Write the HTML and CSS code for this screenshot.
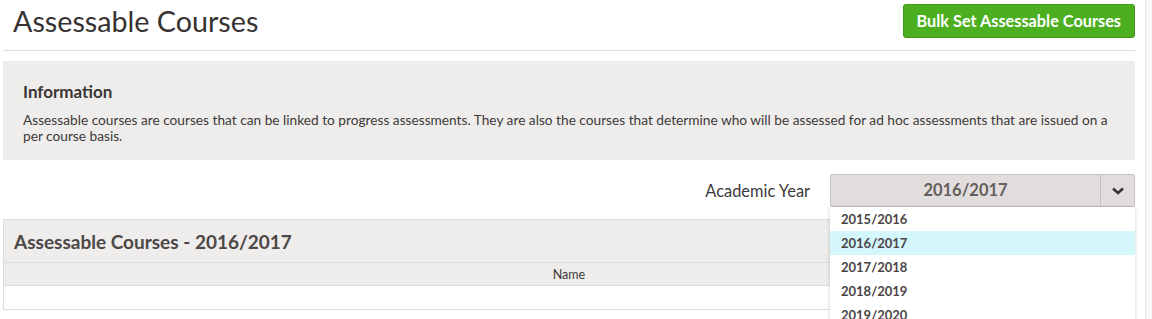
FILE: index.html
```html
<!DOCTYPE html>
<html lang="en">
<head>
    <meta charset="UTF-8">
    <title>Assessable Courses</title>
    <link rel="stylesheet" href="styles.css">
</head>
<body>
<div class="page">
    <div class="content">
        <div class="page-head">
            <h1>Assessable Courses</h1>
            <a href="" class="btn-green">Bulk Set Assessable Courses</a>
        </div>
        <hr>
        <div class="info">
            <h3>Information</h3>
            <p>Assessable courses are courses that can be linked to progress assessments. They are also the courses that determine who will be assessed for ad hoc assessments that are issued on a per course basis.</p>
        </div>
        <div class="year-row">
            <label>Academic Year</label>
            <div class="select">
                <div class="select-value">2016/2017</div>
                <div class="select-arrow">
                    <svg width="14" height="10" viewBox="0 0 14 10"><path d="M2 2.5 L7 7 L12 2.5" fill="none" stroke="#3a3535" stroke-width="2.6"/></svg>
                </div>
                <ul class="options">
                    <li>2015/2016</li>
                    <li class="active">2016/2017</li>
                    <li>2017/2018</li>
                    <li>2018/2019</li>
                    <li>2019/2020</li>
                </ul>
            </div>
        </div>
        <div class="panel">
            <div class="panel-head">Assessable Courses - 2016/2017</div>
            <div class="th">Name</div>
            <div class="td"></div>
        </div>
    </div>
    <div class="scrollbar"></div>
</div>
</body>
</html>
```

FILE: styles.css
```css
* {
    padding: 0;
    margin: 0;
    box-sizing: border-box;
}
a {
    text-decoration: none;
    color: inherit;
}
li {
    list-style: none;
}
body {
    font-family: Lato, "Open Sans", sans-serif;
    color: #3d3939;
    background: #fff;
}
.page {
    display: flex;
    height: 319px;
    overflow: hidden;
}
.content {
    width: 1145px;
    padding: 4px 10px 0 3px;
}
.scrollbar {
    flex: 1;
    background: #f9f9f9;
    border-left: 1px solid #e6e6e6;
}
.page-head {
    display: flex;
    justify-content: space-between;
    align-items: flex-start;
    height: 46px;
}
.page-head h1 {
    font-weight: normal;
    font-size: 28.7px;
    line-height: 34px;
    padding-left: 10px;
    color: #363232;
}
.btn-green {
    display: block;
    height: 34px;
    line-height: 32px;
    padding: 0 13px;
    background: #4caf20;
    border: 1px solid #3e9a17;
    border-radius: 3px;
    color: #fff;
    font-weight: bold;
    font-size: 16.3px;
}
hr {
    border: 0;
    border-top: 1px solid #dedede;
}
.info {
    margin-top: 10px;
    height: 99px;
    background: #eeedeb;
    padding: 21px 20px 0 20px;
}
.info h3 {
    font-size: 17px;
    line-height: 20px;
    color: #3a3535;
}
.info p {
    margin-top: 10px;
    font-size: 13.7px;
    line-height: 16px;
}
.year-row {
    display: flex;
    justify-content: flex-end;
    align-items: center;
    margin-top: 14px;
    height: 33px;
}
.year-row label {
    font-size: 16.4px;
    margin-right: 20px;
}
.select {
    position: relative;
    display: flex;
    width: 305px;
    height: 33px;
    background: #e1dddc;
    border: 1px solid #c5c1c0;
    border-radius: 2px;
}
.select-value {
    flex: 1;
    text-align: center;
    line-height: 31px;
    font-size: 16.5px;
    font-weight: bold;
    color: #645d5b;
}
.select-arrow {
    width: 34px;
    border-left: 1px solid #c5c1c0;
    display: flex;
    align-items: center;
    justify-content: center;
}
.options {
    position: absolute;
    top: 32px;
    left: -1px;
    width: 305px;
    background: #fff;
    box-shadow: 0 1px 4px rgba(0, 0, 0, 0.2);
    z-index: 2;
}
.options li {
    height: 24px;
    line-height: 24px;
    padding-left: 11px;
    font-size: 13px;
    font-weight: bold;
    color: #4a4545;
}
.options li.active {
    background: #d3f7fb;
}
.panel {
    margin-top: 12px;
    border: 1px solid #dcdcdc;
    border-bottom: 0;
}
.panel-head {
    height: 43px;
    line-height: 43px;
    padding-left: 10px;
    background: #eeedeb;
    font-size: 19px;
    font-weight: bold;
    color: #4d4746;
    border-bottom: 1px solid #dcdcdc;
}
.th {
    height: 23px;
    line-height: 23px;
    text-align: center;
    background: #eeedeb;
    font-size: 12.5px;
    border-bottom: 1px solid #dcdcdc;
}
.td {
    height: 24px;
    border-bottom: 1px solid #dcdcdc;
}
```
